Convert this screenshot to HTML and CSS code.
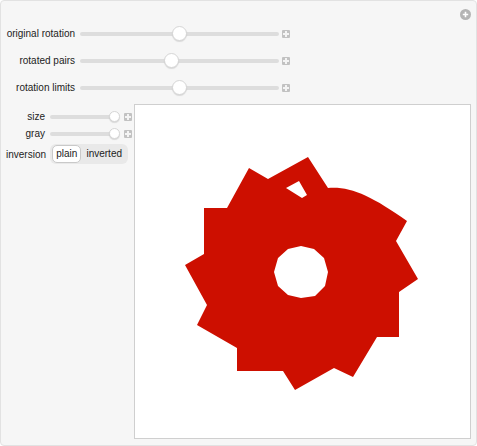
FILE: index.html
```html
<!DOCTYPE html>
<html>
<head>
<meta charset="utf-8">
<link rel="stylesheet" href="styles.css">
</head>
<body>
<div class="panel">
  <div class="corner-btn">
    <svg width="11" height="11" viewBox="0 0 11 11"><circle cx="5.5" cy="5.5" r="5.5" fill="#b4b4b4"/><path d="M5.5 2.8v5.4M2.8 5.5h5.4" stroke="#fff" stroke-width="1.6"/></svg>
  </div>
  <div class="top-controls">
    <div class="row">
      <span class="label">original rotation</span>
      <div class="slider wide"><div class="track"></div><div class="thumb" style="left:91.5px"></div></div>
      <span class="plus"></span>
    </div>
    <div class="row">
      <span class="label">rotated pairs</span>
      <div class="slider wide"><div class="track"></div><div class="thumb" style="left:83.5px"></div></div>
      <span class="plus"></span>
    </div>
    <div class="row">
      <span class="label">rotation limits</span>
      <div class="slider wide"><div class="track"></div><div class="thumb" style="left:91.5px"></div></div>
      <span class="plus"></span>
    </div>
  </div>
  <div class="lower">
    <div class="side">
      <div class="srow">
        <span class="slabel">size</span>
        <div class="slider small"><div class="track"></div><div class="thumb mini" style="left:59px"></div></div>
        <span class="plus"></span>
      </div>
      <div class="srow">
        <span class="slabel">gray</span>
        <div class="slider small"><div class="track"></div><div class="thumb mini" style="left:59px"></div></div>
        <span class="plus"></span>
      </div>
      <div class="srow inv">
        <span class="slabel">inversion</span>
        <div class="toggle">
          <span class="opt selected">plain</span>
          <span class="opt">inverted</span>
        </div>
      </div>
    </div>
    <div class="plot">
      <svg width="335" height="333" viewBox="135 105 335 333">
        <path fill="#cd0f00" fill-rule="evenodd" d="M204 208 L227 208 L249 168 L268 179 L308 157 L328 188 C350 186 372 196 407 221 L396 241 L418 279 L399 292 L399 337 L377 337 L353 377 L334 368 L295 390 L283 371 L237 371 L237 348 L197 325 L207 305 L185 265 L204 254 Z
        M301 246 L314 249 L324 258 L328 272 L325 286 L315 296 L301 298 L288 295 L278 286 L274 272 L278 258 L288 249 Z
        M286 188 L299 181 L307 195 L302 198 Z"/>
      </svg>
    </div>
  </div>
</div>
</body>
</html>
```
FILE: styles.css
```css
html, body {
  margin: 0;
  padding: 0;
  background: #ffffff;
}
body {
  font-family: "Liberation Sans", Arial, sans-serif;
  font-size: 10px;
  color: #222;
}
.panel {
  position: relative;
  width: 477px;
  height: 446px;
  box-sizing: border-box;
  border: 1px solid #e2e2e2;
  border-radius: 4px;
  background: #f6f6f6;
  padding: 19px 5px 0 5px;
}
.corner-btn {
  position: absolute;
  top: 8px;
  left: 459px;
  width: 11px;
  height: 11px;
}
.corner-btn svg { display: block; }
.row {
  display: flex;
  align-items: center;
  height: 27px;
}
.label {
  width: 69px;
  text-align: right;
  margin-right: 5px;
  white-space: nowrap;
}
.slider {
  position: relative;
  height: 16px;
}
.slider.wide { width: 199px; margin-right: 3px; }
.slider.small { width: 69px; margin-right: 5px; }
.track {
  position: absolute;
  left: 0;
  right: 0;
  top: 6px;
  height: 4px;
  border-radius: 2px;
  background: #dddddd;
}
.thumb {
  position: absolute;
  top: 0;
  width: 15px;
  height: 15px;
  box-sizing: border-box;
  border-radius: 50%;
  background: #ffffff;
  border: 1px solid #d6d6d6;
  box-shadow: 0 1px 1px rgba(0,0,0,0.12);
}
.thumb.mini {
  width: 11px;
  height: 11px;
  top: 2.5px;
}
.plus {
  position: relative;
  width: 8px;
  height: 8px;
  background: #c2c2c2;
  border-radius: 1px;
  flex: none;
}
.plus::before, .plus::after {
  content: "";
  position: absolute;
  background: #f4f4f4;
}
.plus::before { left: 3px; top: 1px; width: 2px; height: 6px; }
.plus::after { left: 1px; top: 3px; width: 6px; height: 2px; }
.lower {
  display: flex;
  margin-top: 3px;
}
.side {
  width: 128px;
  padding-top: 4px;
  flex: none;
}
.srow {
  display: flex;
  align-items: center;
  height: 17px;
}
.srow.inv {
  height: 20px;
  margin-top: 2px;
}
.slabel {
  width: 39px;
  text-align: right;
  margin-right: 5px;
  white-space: nowrap;
}
.srow.inv .slabel { margin-right: 5px; }
.toggle {
  display: flex;
  align-items: center;
  height: 20px;
  width: 78px;
  box-sizing: border-box;
  padding: 0 2px;
  background: #e9e9e9;
  border-radius: 6px;
}
.opt {
  height: 18px;
  line-height: 16px;
  box-sizing: border-box;
  padding: 0 3px;
  border: 1px solid transparent;
}
.opt.selected {
  background: #ffffff;
  border-color: #c9c9c9;
  border-radius: 5px;
  width: 31px;
  text-align: center;
  padding: 0;
}
.opt + .opt { margin-left: 1px; }
.plot {
  width: 337px;
  height: 335px;
  box-sizing: border-box;
  border: 1px solid #cfcfcf;
  background: #ffffff;
}
.plot svg { display: block; }
```
